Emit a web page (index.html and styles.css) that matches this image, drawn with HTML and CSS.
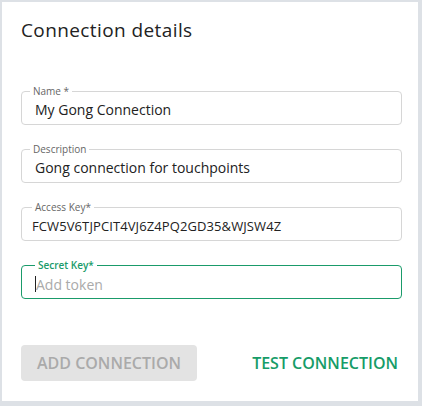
FILE: index.html
```html
<!DOCTYPE html>
<html lang="en">
<head>
  <meta charset="UTF-8">
  <meta name="viewport" content="width=device-width, initial-scale=1.0">
  <title>Connection details</title>
  <link rel="stylesheet" href="styles.css">
</head>
<body>
  <div class="card">
    <h1>Connection details</h1>
    <form class="conn-form">
      <!-- Name -->
      <fieldset class="field">
        <legend>Name *</legend>
        <input type="text" value="My Gong Connection">
      </fieldset>

      <!-- Description -->
      <fieldset class="field">
        <legend>Description</legend>
        <input type="text" value="Gong connection for touchpoints">
      </fieldset>

      <!-- Access Key -->
      <fieldset class="field field-key">
        <legend>Access Key*</legend>
        <input type="text" value="FCW5V6TJPCIT4VJ6Z4PQ2GD35&amp;WJSW4Z">
      </fieldset>

      <!-- Secret Key (focused) -->
      <fieldset class="field field-focus">
        <legend>Secret Key*</legend>
        <div class="fake-input"><span class="caret"></span><span class="placeholder">Add token</span></div>
      </fieldset>

      <div class="actions">
        <button type="button" class="btn-add" disabled>ADD CONNECTION</button>
        <button type="button" class="btn-test">TEST CONNECTION</button>
      </div>
    </form>
  </div>
</body>
</html>
```

FILE: styles.css
```css
/* Connection details card */
html, body {
  margin: 0;
  padding: 0;
}

body {
  width: 422px;
  height: 406px;
  background-color: #dde1e6;
  font-family: "Open Sans", sans-serif;
  color: #222;
  overflow: hidden;
}

.card {
  box-sizing: border-box;
  margin: 2px 4px 0 2px;
  width: 416px;
  height: 399px;
  padding: 16px 16px 0 19px;
  background-color: #fff;
}

h1 {
  margin: 0;
  font-size: 19px;
  font-weight: 400;
  letter-spacing: 0.4px;
  line-height: 24px;
  color: #222;
}

.conn-form {
  margin-top: 44px;
}

.field {
  position: relative;
  box-sizing: border-box;
  height: 39px;
  margin: 0 0 19px 0;
  padding: 0 13px;
  border: 1px solid #d6d6d6;
  border-radius: 4px;
}

.field legend {
  padding: 0 3px;
  margin-left: -5px;
  font-size: 10px;
  line-height: 11px;
  color: #666;
}

.field input {
  display: block;
  width: 100%;
  margin-top: 3px;
  padding: 0;
  border: none;
  outline: none;
  background: transparent;
  font-family: inherit;
  font-size: 14px;
  line-height: 20px;
  color: #222;
}

.field-key {
  padding-left: 10px;
}

.field-key legend {
  margin-left: 0;
}

.field-key input {
  font-size: 13px;
  letter-spacing: 0.1px;
}

.field-focus {
  border-color: #1a9b6a;
}

.field-focus legend {
  margin-left: 0;
  color: #1a9b6a;
  font-weight: 600;
}

.fake-input {
  display: flex;
  align-items: center;
  margin-top: 3px;
  height: 20px;
  font-size: 14px;
}

.caret {
  width: 1px;
  height: 16px;
  background-color: #222;
}

.placeholder {
  color: #aaa;
}

.actions {
  display: flex;
  justify-content: space-between;
  align-items: center;
  margin-top: 46px;
}

.actions button {
  height: 36px;
  border: none;
  border-radius: 4px;
  font-family: inherit;
  font-size: 16px;
  font-weight: 600;
}

.btn-add {
  width: 176px;
  background-color: #e3e3e3;
  color: #aaa;
}

.btn-test {
  padding: 0 4px;
  background: transparent;
  color: #169c68;
  cursor: pointer;
}
```
